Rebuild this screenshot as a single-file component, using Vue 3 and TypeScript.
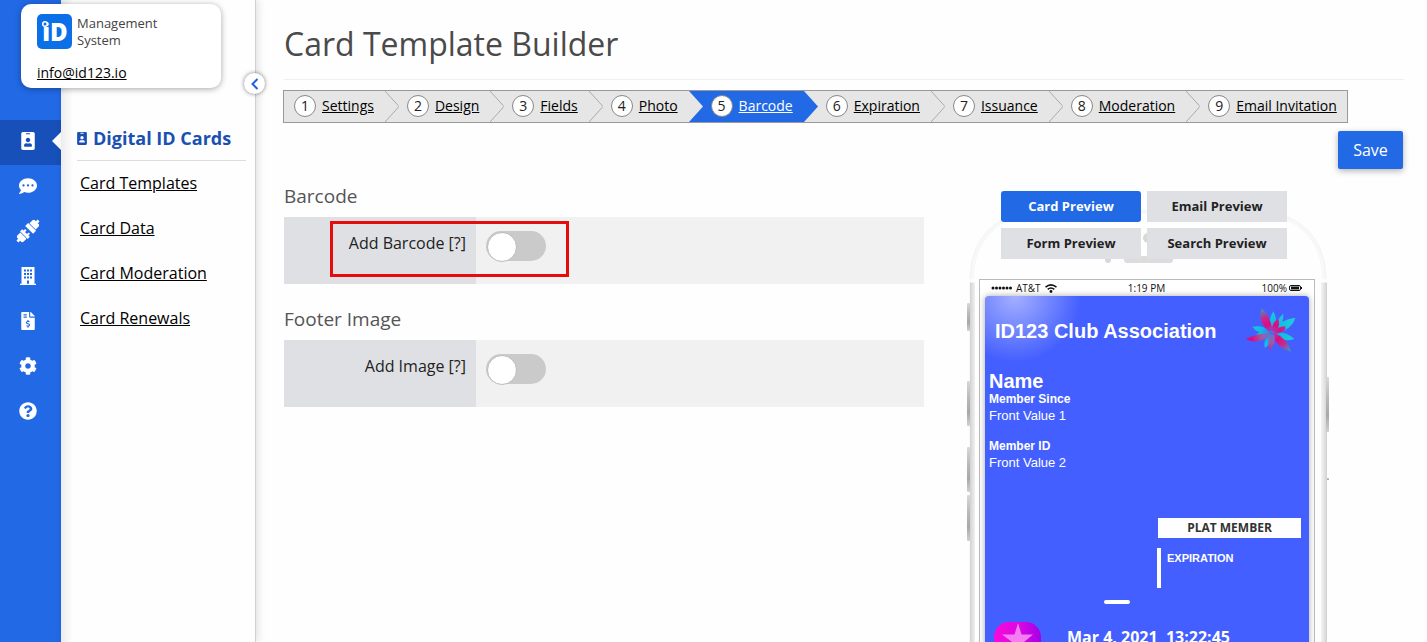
<script setup lang="ts">
import { ref } from 'vue'

interface NavItem {
  label: string
  viewBox: string
  width: number
  height: number
  path: string
  transform?: string
}

const badgePath =
  'M336 0H48C21.5 0 0 21.5 0 48v416c0 26.5 21.5 48 48 48h288c26.5 0 48-21.5 48-48V48c0-26.5-21.5-48-48-48zM144 32h96c8.8 0 16 7.2 16 16s-7.2 16-16 16h-96c-8.8 0-16-7.2-16-16s7.2-16 16-16zm48 128c35.3 0 64 28.7 64 64s-28.7 64-64 64-64-28.7-64-64 28.7-64 64-64zm112 236.8c0 10.6-10 19.2-22.4 19.2H102.4C90 416 80 407.4 80 396.8v-19.2c0-31.8 30.1-57.6 67.2-57.6h5c12.3 5.1 25.7 8 39.8 8s27.6-2.9 39.8-8h5c37.1 0 67.2 25.8 67.2 57.6v19.2z'

const navItems: NavItem[] = [
  { label: 'Digital ID Cards', viewBox: '0 0 384 512', width: 14, height: 18, path: badgePath },
  {
    label: 'Messages',
    viewBox: '0 0 512 512',
    width: 18,
    height: 18,
    path: 'M256 32C114.6 32 0 125.1 0 240c0 49.6 21.4 95 57 130.7C44.5 421.1 2.7 466 2.2 466.5c-2.2 2.3-2.8 5.7-1.5 8.7S4.8 480 8 480c66.3 0 116-31.8 140.6-51.4 32.7 12.3 69 19.4 107.4 19.4 141.4 0 256-93.1 256-208S397.4 32 256 32zM128 272c-17.7 0-32-14.3-32-32s14.3-32 32-32 32 14.3 32 32-14.3 32-32 32zm128 0c-17.7 0-32-14.3-32-32s14.3-32 32-32 32 14.3 32 32-14.3 32-32 32zm128 0c-17.7 0-32-14.3-32-32s14.3-32 32-32 32 14.3 32 32-14.3 32-32 32z',
  },
  {
    label: 'Integrations',
    viewBox: '0 0 22 22',
    width: 22,
    height: 22,
    transform: 'rotate(-45 11 11)',
    path: 'M-4 9.6H-1.4V8Q-1 6.8 0.2 6.6H4.6V15.4H0.2Q-1 15.2 -1.4 14V12.4H-4zM5.2 5.6H8.2V7.6H10.4V9.6H8.2V12.4H10.4V14.4H8.2V16.4H5.2zM26 9.6H23.4V8Q23 6.8 21.8 6.6H17.4V15.4H21.8Q23 15.2 23.4 14V12.4H26zM16.8 5.4H12.6V16.6H16.8z',
  },
  {
    label: 'Organization',
    viewBox: '0 0 16 18',
    width: 16,
    height: 18,
    path: 'M1.5 0h13v16.8H16V18H0v-1.2h1.5zM4 2.5v2h2v-2zM7 2.5v2h2v-2zM10 2.5v2h2v-2zM4 6v2h2V6zM7 6v2h2V6zM10 6v2h2V6zM4 9.5v2h2v-2zM7 9.5v2h2v-2zM10 9.5v2h2v-2zM7 13.5v3.3h2v-3.3z',
  },
  {
    label: 'Billing',
    viewBox: '0 0 384 512',
    width: 14,
    height: 18,
    path: 'M377 105L279.1 7c-4.500-4.500-10.600-7-17-7H256v128h128v-6.100c0-6.300-2.500-12.400-7-16.900zm-153 31V0H24C10.700 0 0 10.700 0 24v464c0 13.300 10.700 24 24 24h336c13.300 0 24-10.700 24-24V160H248c-13.200 0-24-10.800-24-24zM64 72c0-4.400 3.600-8 8-8h80c4.400 0 8 3.600 8 8v16c0 4.400-3.600 8-8 8H72c-4.400 0-8-3.600-8-8V72zm0 80v-16c0-4.400 3.600-8 8-8h80c4.400 0 8 3.600 8 8v16c0 4.400-3.600 8-8 8H72c-4.400 0-8-3.600-8-8zm144 263.900V440c0 4.400-3.600 8-8 8h-16c-4.400 0-8-3.600-8-8v-24.300c-11.300-.6-22.300-4.500-31.400-11.300-3.900-2.900-4.100-8.800-.6-12.100l11.800-11.200c2.800-2.600 6.900-2.800 10.100-.7 3.900 2.400 8.300 3.700 12.800 3.700h28.100c6.500 0 11.800-5.900 11.800-13.200 0-6-3.600-11.200-8.800-12.700l-45-13.500c-18.600-5.600-31.600-23.400-31.600-43.400 0-24.500 19.100-44.400 42.700-45.100V232c0-4.400 3.600-8 8-8h16c4.400 0 8 3.600 8 8v24.300c11.300.6 22.300 4.500 31.400 11.300 3.900 2.900 4.100 8.800.6 12.100l-11.800 11.200c-2.800 2.600-6.900 2.800-10.100.7-3.900-2.400-8.300-3.700-12.800-3.700h-28.100c-6.500 0-11.800 5.900-11.800 13.200 0 6 3.600 11.200 8.800 12.700l45 13.500c18.600 5.600 31.600 23.400 31.600 43.400 0 24.500-19 44.400-42.700 45.100z',
  },
  {
    label: 'Configuration',
    viewBox: '0 0 512 512',
    width: 18,
    height: 18,
    path: 'M487.4 315.7l-42.6-24.6c4.3-23.2 4.3-47 0-70.2l42.6-24.6c4.9-2.8 7.100-8.600 5.500-14-11.100-35.600-30-67.800-54.700-94.600-3.800-4.100-10-5.100-14.800-2.300L380.8 110c-17.900-15.400-38.500-27.300-60.800-35.100V25.800c0-5.600-3.900-10.500-9.400-11.700-36.700-8.200-74.300-7.800-109.200 0-5.500 1.200-9.400 6.100-9.400 11.700V75c-22.200 7.900-42.800 19.800-60.800 35.100L88.700 85.500c-4.900-2.800-11-1.900-14.800 2.300-24.700 26.700-43.600 58.900-54.700 94.600-1.700 5.400.6 11.200 5.500 14L67.300 221c-4.300 23.200-4.300 47 0 70.200l-42.600 24.600c-4.900 2.800-7.100 8.600-5.500 14 11.100 35.600 30 67.800 54.700 94.600 3.800 4.100 10 5.100 14.800 2.300l42.600-24.600c17.900 15.400 38.500 27.300 60.800 35.100v49.200c0 5.600 3.900 10.500 9.400 11.700 36.700 8.200 74.300 7.800 109.200 0 5.500-1.200 9.400-6.100 9.400-11.700v-49.200c22.200-7.900 42.800-19.800 60.800-35.100l42.600 24.600c4.900 2.800 11 1.900 14.800-2.300 24.700-26.700 43.600-58.900 54.700-94.600 1.500-5.500-.7-11.300-5.600-14.100zM256 336c-44.100 0-80-35.900-80-80s35.900-80 80-80 80 35.900 80 80-35.900 80-80 80z',
  },
  {
    label: 'Help',
    viewBox: '0 0 512 512',
    width: 18,
    height: 18,
    path: 'M504 256c0 137-111 248-248 248S8 393 8 256C8 119.100 119 8 256 8s248 111.100 248 248zM262.700 90c-54.500 0-89.300 23-116.600 63.800-3.500 5.300-2.400 12.400 2.700 16.200l34.700 26.300c5.200 3.900 12.600 3 16.700-2.100 17.900-22.700 30.100-35.800 57.300-35.800 20.400 0 45.700 13.100 45.700 33 0 15-12.400 22.700-32.500 34C247.100 238.500 216 254.900 216 296v4c0 6.600 5.400 12 12 12h56c6.600 0 12-5.400 12-12v-1.300c0-28.500 83.200-29.600 83.200-106.700 0-58-60.200-102-116.500-102zM256 338c-25.400 0-46 20.600-46 46s20.600 46 46 46 46-20.600 46-46-20.600-46-46-46z',
  },
]

const sectionLinks = ['Card Templates', 'Card Data', 'Card Moderation', 'Card Renewals']

const steps = [
  'Settings',
  'Design',
  'Fields',
  'Photo',
  'Barcode',
  'Expiration',
  'Issuance',
  'Moderation',
  'Email Invitation',
]
const activeStep = ref(4)

const previews = ['Card Preview', 'Email Preview', 'Form Preview', 'Search Preview']
const activePreview = ref('Card Preview')

const addBarcode = ref(false)
const addImage = ref(false)

const fields = [
  { label: 'Member Since', value: 'Front Value 1' },
  { label: 'Member ID', value: 'Front Value 2' },
]

const stepFill = (i: number) => (i === activeStep.value ? '#2269e6' : '#e6e6e6')
const touchesActive = (i: number) => i === activeStep.value || i + 1 === activeStep.value
</script>

<template>
  <div class="shell">
    <nav class="rail" aria-label="Main">
      <a
        v-for="(item, i) in navItems"
        :key="item.label"
        href="#"
        class="rail-link"
        :class="{ current: i === 0 }"
        :aria-label="item.label"
      >
        <svg :viewBox="item.viewBox" :width="item.width" :height="item.height" class="rail-icon" aria-hidden="true">
          <path :d="item.path" :transform="item.transform" fill="#fff" fill-rule="evenodd" />
        </svg>
      </a>
    </nav>

    <aside class="section">
      <h2 class="section-title">
        <svg viewBox="0 0 384 512" width="10" height="13" aria-hidden="true">
          <path :d="badgePath" fill="#1a4fb3" fill-rule="evenodd" />
        </svg>
        Digital ID Cards
      </h2>
      <ul class="section-list">
        <li v-for="link in sectionLinks" :key="link"><a href="#">{{ link }}</a></li>
      </ul>
      <button class="collapse" type="button" aria-label="Collapse menu">
        <svg viewBox="0 0 8 12" width="8" height="12" aria-hidden="true">
          <path d="M6.500 1L1.500 6L6.500 11" fill="none" stroke="#1f62dc" stroke-width="2" />
        </svg>
      </button>
    </aside>

    <div class="account">
      <div class="brand">
        <svg class="brand-mark" viewBox="0 0 35 35" width="35" height="35" aria-hidden="true">
          <rect width="35" height="35" rx="5" fill="#0b6fe8" />
          <text x="18" y="27" text-anchor="middle" class="brand-letters">iD</text>
          <circle cx="8" cy="10" r="3" fill="#fff" />
          <circle cx="8" cy="10" r="1.500" fill="#0b6fe8" />
        </svg>
        <span class="brand-name">Management<br />System</span>
      </div>
      <a href="#" class="email">info@id123.io</a>
    </div>

    <main class="main">
      <h1 class="title">Card Template Builder</h1>

      <ol class="steps">
        <li
          v-for="(step, i) in steps"
          :key="step"
          class="step"
          :class="{ active: i === activeStep }"
        >
          <a href="#" class="step-link" @click.prevent="activeStep = i">
            <span class="step-number">{{ i + 1 }}</span>
            <span class="step-label">{{ step }}</span>
          </a>
          <svg v-if="i < steps.length - 1" viewBox="0 0 14 31" width="14" height="31" class="step-arrow" aria-hidden="true">
            <rect width="14" height="31" :fill="stepFill(i + 1)" />
            <path d="M0 0L14 15.500L0 31z" :fill="stepFill(i)" />
            <path v-if="!touchesActive(i)" d="M0 0L14 15.500L0 31" fill="none" stroke="#aaa" />
          </svg>
        </li>
      </ol>

      <div class="toolbar">
        <button type="button" class="save">Save</button>
      </div>

      <div class="columns">
        <form class="form" @submit.prevent>
          <h3 class="group-title">Barcode</h3>
          <div class="row">
            <label class="row-label" for="add-barcode">Add Barcode [?]</label>
            <div class="row-field">
              <input id="add-barcode" v-model="addBarcode" type="checkbox" class="toggle" />
            </div>
            <span class="highlight"></span>
          </div>
          <h3 class="group-title">Footer Image</h3>
          <div class="row">
            <label class="row-label" for="add-image">Add Image [?]</label>
            <div class="row-field">
              <input id="add-image" v-model="addImage" type="checkbox" class="toggle" />
            </div>
          </div>
        </form>

        <section class="preview" aria-label="Preview">
          <svg class="frame" viewBox="0 0 362 700" width="362" height="700" aria-hidden="true">
            <defs>
              <linearGradient id="edge" x1="0" x2="1" y1="0" y2="0">
                <stop offset="0" stop-color="#d2d2d2" />
                <stop offset="1" stop-color="#f0f0f0" />
              </linearGradient>
              <linearGradient id="edge-right" x1="0" x2="1" y1="0" y2="0">
                <stop offset="0" stop-color="#f4f4f4" />
                <stop offset="0.700" stop-color="#dedede" />
                <stop offset="1" stop-color="#cfcfcf" />
              </linearGradient>
              <linearGradient id="key" x1="0" x2="0" y1="0" y2="1">
                <stop offset="0" stop-color="#d8d8d8" />
                <stop offset="0.400" stop-color="#b8b8b8" />
                <stop offset="0.700" stop-color="#a8a8a8" />
                <stop offset="1" stop-color="#d0d0d0" />
              </linearGradient>
            </defs>
            <path d="M5 700V70C5 28 32 2 76 2H286C330 2 357 28 357 70V700" fill="#fefefe" stroke="#f8f8f8" stroke-width="4" />
            <path d="M3 700V70C3 26 32 0.500 76 0.500H286C330 0.500 359 26 359 70V700" fill="none" stroke="#f3f3f3" />
            <circle cx="181" cy="28" r="5" fill="#d8d8d8" />
            <circle cx="141" cy="50" r="3" fill="#d8d8d8" />
            <rect x="157" y="46" width="49" height="7" rx="3" fill="#dcdcdc" />
            <rect x="3" y="70" width="5" height="630" fill="url(#edge)" />
            <rect x="354" y="70" width="6" height="630" fill="url(#edge-right)" />
            <path d="M3 71H8M354 71H360" stroke="#fff" stroke-width="3" />
            <g fill="url(#key)">
              <rect y="93" width="3" height="28" rx="1" />
              <rect y="171" width="3" height="45" rx="1" />
              <rect y="237" width="3" height="45" rx="1" />
              <rect y="285" width="3" height="46" rx="1" />
              <rect x="359" y="167" width="3" height="55" rx="1" />
              <rect x="360" y="268" width="2" height="2" />
            </g>
          </svg>

          <div class="tabs">
            <button
              v-for="name in previews"
              :key="name"
              type="button"
              class="tab"
              :class="{ selected: name === activePreview }"
              @click="activePreview = name"
            >
              {{ name }}
            </button>
          </div>

          <div class="screen">
            <div class="status">
              <span class="carrier">
                <svg viewBox="0 0 21 4" width="21" height="4" aria-hidden="true">
                  <path d="M2 2H20" stroke="#111" stroke-width="3" stroke-linecap="round" stroke-dasharray="0 3.500" />
                </svg>
                AT&amp;T
                <svg viewBox="0 0 12 9" width="12" height="9" aria-hidden="true">
                  <g fill="none" stroke="#111" stroke-width="1.500">
                    <path d="M0.500 3.200Q6 -1.400 11.500 3.200" />
                    <path d="M2.700 5.400Q6 2.600 9.300 5.400" />
                  </g>
                  <circle cx="6" cy="7.500" r="1.400" fill="#111" />
                </svg>
              </span>
              <span>1:19 PM</span>
              <span class="charge">
                100%
                <svg viewBox="0 0 13 6" width="13" height="6" aria-hidden="true">
                  <rect x="0.500" y="0.500" width="11" height="5" rx="1.500" fill="none" stroke="#111" />
                  <rect x="2" y="1.500" width="8" height="3" fill="#111" />
                  <rect x="12" y="2" width="1" height="2" fill="#111" />
                </svg>
              </span>
            </div>

            <article class="card">
              <header class="card-head">
                <h4 class="card-title">ID123 Club Association</h4>
                <svg class="burst" viewBox="40 22 156 138" width="52" height="46" aria-hidden="true">
                  <defs>
                    <radialGradient id="pink" gradientUnits="userSpaceOnUse" cx="118" cy="100" r="78">
                      <stop offset="0" stop-color="#8a50c0" />
                      <stop offset="0.350" stop-color="#dc0c84" />
                      <stop offset="0.650" stop-color="#c42c8c" />
                      <stop offset="1" stop-color="#3c98c0" />
                    </radialGradient>
                    <radialGradient id="rose" gradientUnits="userSpaceOnUse" cx="118" cy="100" r="78">
                      <stop offset="0" stop-color="#5c78d8" />
                      <stop offset="0.400" stop-color="#a05aa0" />
                      <stop offset="0.800" stop-color="#dc0884" />
                    </radialGradient>
                    <radialGradient id="cyan" gradientUnits="userSpaceOnUse" cx="118" cy="100" r="78">
                      <stop offset="0" stop-color="#3e74f0" />
                      <stop offset="0.400" stop-color="#10bce6" />
                      <stop offset="1" stop-color="#22ccd4" />
                    </radialGradient>
                  </defs>
                  <g fill="url(#cyan)">
                    <path d="M116 100Q106 64 125 35Q141 60 126 100z" />
                    <path d="M122 94Q134 60 155 42Q158 70 132 96z" />
                    <path d="M124 96Q146 58 191 54Q182 88 136 102z" />
                    <path d="M122 100Q160 92 188 118Q158 128 126 110z" />
                    <path d="M116 96Q90 74 62 82Q76 102 114 104z" />
                    <path d="M116 98Q92 90 74 104Q86 114 116 106z" />
                    <path d="M116 104Q92 120 100 145Q120 130 126 106z" />
                  </g>
                  <g fill="url(#pink)">
                    <path d="M112 96Q76 66 90 26Q116 48 122 92z" />
                    <path d="M120 102Q132 142 178 156Q168 116 128 100z" />
                    <path d="M120 96Q120 66 140 58Q148 76 132 96z" />
                    <path d="M126 98Q138 80 160 80Q168 96 134 102z" />
                  </g>
                  <g fill="url(#rose)">
                    <path d="M116 102Q80 98 42 118Q74 136 116 110z" />
                    <path d="M118 104Q104 130 114 152Q134 130 128 106z" />
                  </g>
                </svg>
              </header>
              <div class="holder">Name</div>
              <dl class="fields">
                <div v-for="field in fields" :key="field.label" class="field">
                  <dt>{{ field.label }}</dt>
                  <dd>{{ field.value }}</dd>
                </div>
              </dl>
              <div class="level">
                <div class="level-name">PLAT MEMBER</div>
                <div class="expiry">EXPIRATION</div>
              </div>
              <div class="handle"></div>
              <footer class="card-foot">
                <svg viewBox="0 0 47 47" width="47" height="47" aria-hidden="true">
                  <defs>
                    <linearGradient id="badge" x1="0" x2="1" y1="0" y2="0">
                      <stop offset="0" stop-color="#f808dc" />
                      <stop offset="0.500" stop-color="#dc0ae0" />
                      <stop offset="1" stop-color="#a400e8" />
                    </linearGradient>
                  </defs>
                  <rect width="47" height="47" rx="15" fill="url(#badge)" />
                  <path d="M24 1L27.500 12.500H39L30 20L33.500 32L24 25L14.500 32L18 20L8 12.500H20.500z" fill="#f57cf2" />
                </svg>
                <time datetime="2021-03-04T13:22:45">Mar 4, 2021&nbsp; 13:22:45</time>
              </footer>
            </article>
          </div>
        </section>
      </div>
    </main>
  </div>
</template>

<style>
body {
  margin: 0;
  background: #fefefe;
}
</style>

<style scoped>
.shell,
.shell * {
  box-sizing: border-box;
}
.shell {
  position: relative;
  display: flex;
  height: 100vh;
  overflow: hidden;
  background: #fefefe;
  color: #222;
  font: 16px/24px 'Open Sans', 'Noto Sans', sans-serif;
}
a {
  color: #000;
}
button {
  border: 0;
  padding: 0;
  font-family: inherit;
  cursor: pointer;
}
h1,
h2,
h3,
h4,
ul,
ol,
dl,
dd {
  margin: 0;
  padding: 0;
  list-style: none;
}

.rail {
  flex: none;
  width: 61px;
  padding-top: 120px;
  background: #2269e6;
}
.rail-link {
  position: relative;
  display: flex;
  align-items: center;
  height: 45px;
  padding: 0 6px 3px 0;
  justify-content: center;
}
.rail-icon {
  overflow: visible;
}
.rail-link.current {
  background: #1650b8;
}
.rail-link.current::after {
  content: '';
  position: absolute;
  right: 0;
  top: 12px;
  border: 9px solid transparent;
  border-left-width: 0;
  border-right-color: #fff;
}

.section {
  position: relative;
  flex: none;
  width: 195px;
  padding: 126px 9px 0 16px;
  background: linear-gradient(90deg, #ececec, #fefefe 12px);
  border-right: 1px solid #d0d0d0;
  box-shadow: 2px 0 8px rgba(0, 0, 0, 0.12);
}
.section-title {
  display: flex;
  align-items: center;
  gap: 6px;
  height: 35px;
  padding-bottom: 9px;
  border-bottom: 1px solid #ddd;
  color: #1a4fb3;
  font-size: 18px;
  line-height: 25px;
  white-space: nowrap;
}
.section-list li {
  padding: 0 3px;
  line-height: 45px;
}
.collapse {
  position: absolute;
  top: 73px;
  right: -10px;
  display: grid;
  place-items: center;
  width: 21px;
  height: 21px;
  border-radius: 50%;
  background: #fff;
  box-shadow: 0 0 4px rgba(0, 0, 0, 0.5);
}

.account {
  position: absolute;
  left: 21px;
  top: 4px;
  width: 200px;
  height: 84px;
  padding: 10px 16px;
  border-radius: 10px;
  background: #fff;
  box-shadow: 0 1px 6px rgba(0, 0, 0, 0.35);
}
.brand {
  display: flex;
  align-items: center;
  gap: 5px;
  height: 35px;
}
.brand-letters {
  fill: #fff;
  font: 800 24px 'Open Sans', sans-serif;
}
.brand-name {
  color: #444;
  font-size: 13px;
  line-height: 17px;
}
.email {
  display: block;
  margin-top: 14px;
  font-size: 14px;
  line-height: 20px;
}

.main {
  flex: 1;
  min-width: 0;
  padding: 0 23px 0 28px;
}
.title {
  height: 80px;
  padding-top: 20px;
  border-bottom: 1px solid #f0f0f0;
  color: #4a4a4a;
  font-size: 32px;
  font-weight: 400;
  line-height: 48px;
}
.steps {
  display: flex;
  width: max-content;
  margin: 10px 0 0 -1px;
  border: 1px solid #999;
  background: #e6e6e6;
}
.step {
  display: flex;
}
.step-link {
  display: flex;
  align-items: center;
  gap: 6px;
  height: 31px;
  padding: 0 11px 1px 8px;
  color: #000;
  font-size: 14px;
  line-height: 20px;
  text-decoration: none;
}
.step:first-child .step-link {
  padding-left: 10px;
}
.step:last-child .step-link {
  padding-right: 10px;
}
.step-label {
  text-decoration: underline;
}
.step-number {
  width: 22px;
  height: 22px;
  border: 1px solid #888;
  border-radius: 50%;
  background: #fff;
  color: #222;
  text-align: center;
}
.step.active .step-link {
  background: #2269e6;
  color: #fff;
}
.toolbar {
  display: flex;
  justify-content: flex-end;
  padding: 8px 1px 0 0;
}
.save {
  width: 65px;
  height: 38px;
  border-radius: 2px;
  background: #2269e6;
  color: #fff;
  font-size: 16px;
  font-weight: 500;
  box-shadow: 0 2px 6px rgba(0, 0, 0, 0.3);
}

.columns {
  display: grid;
  grid-template-columns: 4fr 3fr;
}
.group-title {
  height: 56px;
  padding-top: 21px;
  color: #555;
  font-size: 19px;
  font-weight: 400;
  line-height: 28px;
}
.group-title:first-child {
  height: 48px;
  padding-top: 13px;
}
.row {
  position: relative;
  display: grid;
  grid-template-columns: 3fr 7fr;
  min-height: 67px;
  background: #f1f1f1;
}
.row-label {
  padding: 14px 10px;
  background: #dfe0e4;
  text-align: right;
}
.row-field {
  padding: 14px 10px;
}
.toggle {
  appearance: none;
  display: block;
  width: 60px;
  height: 30px;
  margin: 0;
  padding: 1px;
  border-radius: 15px;
  background: #cacaca;
}
.toggle::before {
  content: '';
  display: block;
  width: 28px;
  height: 28px;
  border: 1px solid #bbb;
  border-radius: 50%;
  background: #fff;
}
.toggle:checked {
  padding-left: 31px;
  background: #2269e6;
}
.highlight {
  position: absolute;
  left: 46px;
  top: 4px;
  width: 239px;
  height: 56px;
  border: 3px solid #e60c0c;
  pointer-events: none;
}

.preview {
  position: relative;
  width: 362px;
  margin: 41px 0 0 43px;
}
.frame {
  position: absolute;
  left: 0;
  top: 0;
}
.tabs {
  position: absolute;
  left: 34px;
  top: -19px;
  display: grid;
  grid-template-columns: 140px 140px;
  gap: 6px;
}
.tab {
  height: 31px;
  padding-bottom: 2px;
  background: #dfe0e4;
  color: #222;
  font-size: 13px;
  font-weight: 700;
}
.tab.selected {
  border-radius: 3px;
  background: #2269e6;
  color: #fff;
}
.screen {
  position: relative;
  margin: 69px 14px 0 12px;
  padding: 0 5px;
  border: 1px solid #bbb;
  background: #fff;
}
.status {
  display: grid;
  grid-template-columns: 1fr auto 1fr;
  align-items: center;
  height: 16px;
  padding: 0 7px 0 6px;
  color: #111;
  font-size: 10px;
  line-height: 16px;
}
.carrier,
.charge {
  display: flex;
  align-items: center;
}
.carrier {
  gap: 4px;
}
.charge {
  gap: 2px;
  justify-content: flex-end;
}
.card {
  padding: 11px 4px 20px;
  border-radius: 4px;
  background: radial-gradient(circle at 30px 0, #a4b0ff 0, rgba(164, 176, 255, 0) 66px), #445fff;
  box-shadow: 0 0 6px rgba(0, 0, 0, 0.35);
  color: #fff;
  font-family: 'Liberation Sans', Arial, sans-serif;
}
.card-head {
  display: flex;
  justify-content: space-between;
  padding: 0 8px 0 6px;
}
.card-title {
  font-size: 20px;
  line-height: 48px;
  white-space: nowrap;
}
.holder {
  margin-top: 15px;
  font-size: 20px;
  font-weight: 700;
  line-height: 22px;
}
.fields {
  display: grid;
  gap: 13px;
}
.field dt {
  font-size: 12px;
  font-weight: 700;
  line-height: 14px;
}
.field dd {
  font-size: 13px;
  line-height: 20px;
}
.level {
  width: 144px;
  margin: 45px 4px 0 auto;
}
.level-name {
  margin-left: 1px;
  background: #fff;
  color: #333;
  font: 700 12px/20px 'Open Sans', sans-serif;
  text-align: center;
}
.expiry {
  height: 40px;
  margin-top: 10px;
  padding-left: 6px;
  border-left: 4px solid #fff;
  font-size: 11px;
  font-weight: 700;
  line-height: 20px;
}
.handle {
  width: 26px;
  height: 4px;
  margin: 12px 0 18px 115px;
  border-radius: 2px;
  background: #fff;
}
.card-foot {
  display: flex;
  align-items: flex-start;
  gap: 26px;
  padding-left: 5px;
}
.card-foot time {
  padding-top: 4px;
  font: 700 16px/22px 'Open Sans', sans-serif;
}
</style>
